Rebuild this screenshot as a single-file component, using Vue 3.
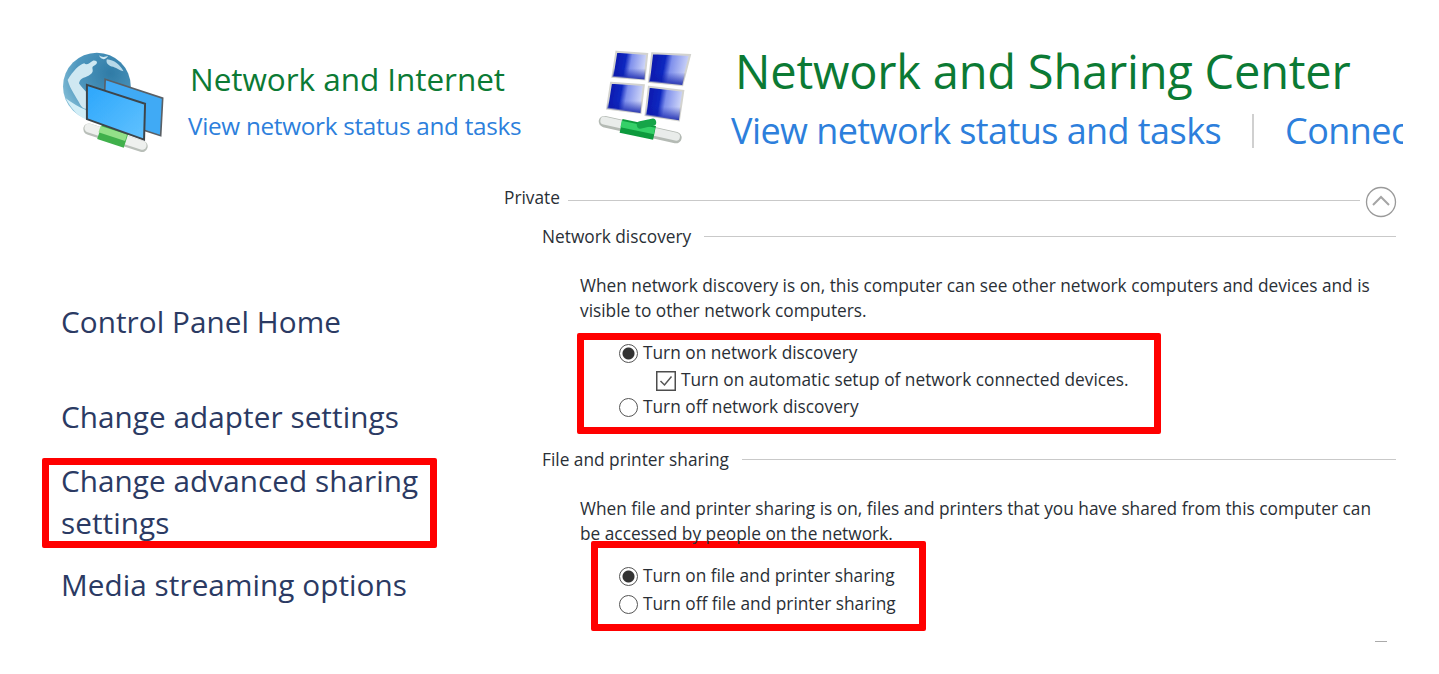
<template>
  <div class="page">
    <aside class="left">
      <header class="net-head">
        <svg class="net-icon" viewBox="60 60 320 310">
          <defs>
            <radialGradient id="globe" cx="0.7" cy="0.3" r="0.85">
              <stop offset="0" stop-color="#2f7ba6" />
              <stop offset="0.6" stop-color="#5098bf" />
              <stop offset="1" stop-color="#8fc6dc" />
            </radialGradient>
            <linearGradient id="screen" x1="0" y1="0" x2="1" y2="1">
              <stop offset="0" stop-color="#2ba6fb" />
              <stop offset="1" stop-color="#62c2ff" />
            </linearGradient>
            <filter id="soft"><feGaussianBlur stdDeviation="1.6" /></filter>
          </defs>
          <g filter="url(#soft)">
            <circle cx="170" cy="170" r="102" fill="url(#globe)" />
            <path d="M82 150 C98 124 116 104 132 100 C140 108 150 96 158 92 C176 90 172 104 160 108 C150 114 166 122 150 134 C136 146 122 140 116 160 C128 180 150 190 150 215 C150 238 132 245 120 225 C108 200 90 180 82 150Z" fill="#cfe8f2" />
            <path d="M176 76 C186 84 196 80 204 78 C196 90 184 92 176 76Z" fill="#cfe8f2" />
            <path d="M200 88 C222 90 240 104 250 124 C236 122 228 112 214 110 C204 106 196 98 200 88Z" fill="#b8d9e9" />
            <path d="M76 205 C92 235 108 255 135 268 L150 262 L136 240 C118 232 96 220 76 205Z" fill="#d2eef7" />
            <g fill="none" stroke-linecap="round">
              <path d="M146 298 L306 350" stroke="#b9bfb9" stroke-width="34" />
              <path d="M146 295 L306 347" stroke="#eef0ee" stroke-width="27" />
              <path d="M178 306 L258 332" stroke="#3fb04c" stroke-width="46" stroke-linecap="butt" />
              <path d="M178 298 L258 324" stroke="#93e088" stroke-width="20" stroke-linecap="butt" />
            </g>
            <polygon points="195,148 368,205 362,318 190,262" fill="#40aaf5" stroke="#5a6066" stroke-width="5" />
            <polygon points="140,165 315,222 312,330 140,268" fill="url(#screen)" stroke="#3e454b" stroke-width="6" />
          </g>
        </svg>
        <div class="net-text">
          <div class="net-title">Network and Internet</div>
          <a class="net-link">View network status and tasks</a>
        </div>
      </header>
      <nav class="side-nav">
        <div class="side-item home">Control Panel Home</div>
        <div class="side-item adapter">Change adapter settings</div>
        <div class="side-box">
          <div class="side-item advanced">Change advanced sharing settings</div>
        </div>
        <div class="side-item media">Media streaming options</div>
      </nav>
    </aside>

    <main class="right">
      <header class="center-head">
        <svg class="center-icon" viewBox="50 60 290 290">
          <defs>
            <linearGradient id="pane" x1="0" y1="0" x2="1" y2="0.15">
              <stop offset="0" stop-color="#0714a8" />
              <stop offset="0.42" stop-color="#0f28c0" />
              <stop offset="0.58" stop-color="#7f90ec" />
              <stop offset="1" stop-color="#cfd6f8" />
            </linearGradient>
            <linearGradient id="paneShade" x1="0" y1="0" x2="0" y2="1">
              <stop offset="0.6" stop-color="#0a1aa8" stop-opacity="0" />
              <stop offset="1" stop-color="#0a1aa8" stop-opacity="0.85" />
            </linearGradient>
            <filter id="soft2"><feGaussianBlur stdDeviation="1.6" /></filter>
          </defs>
          <g filter="url(#soft2)">
            <g fill="url(#pane)" stroke="#d3d3cf" stroke-width="6">
              <polygon points="108,65 200,72 192,148 96,140" />
              <polygon points="215,70 328,75 305,165 205,155" />
              <polygon points="92,158 190,165 180,248 80,235" />
              <polygon points="205,170 308,182 295,270 195,255" />
            </g>
            <g fill="url(#paneShade)">
              <polygon points="108,65 200,72 192,148 96,140" />
              <polygon points="215,70 328,75 305,165 205,155" />
              <polygon points="92,158 190,165 180,248 80,235" />
              <polygon points="205,170 308,182 295,270 195,255" />
            </g>
            <g fill="none" stroke-linecap="round">
              <path d="M72 274 L286 322" stroke="#b4bab4" stroke-width="34" />
              <path d="M72 271 L286 319" stroke="#e9ecea" stroke-width="24" />
              <path d="M122 287 L222 308" stroke="#0d9a3c" stroke-width="42" stroke-linecap="butt" />
              <path d="M122 281 L222 302" stroke="#34d068" stroke-width="20" stroke-linecap="butt" />
              <path d="M180 284 L216 276" stroke="#12a548" stroke-width="22" />
            </g>
          </g>
        </svg>
        <div class="center-text">
          <div class="center-title">Network and Sharing Center</div>
          <div class="center-links">
            <a>View network status and tasks</a>
            <span class="link-sep"></span>
            <a>Connec</a>
          </div>
        </div>
      </header>

      <section class="profile">
        <div class="rule-row profile-row">
          <span>Private</span>
          <span class="rule"></span>
          <svg class="collapse" width="32" height="32" viewBox="0 0 32 32">
            <circle cx="16" cy="16" r="14.5" fill="none" stroke="#9a9a9a" stroke-width="1.3" />
            <path d="M8 19 L16 11 L24 19" fill="none" stroke="#a5a5a5" stroke-width="2" />
          </svg>
        </div>

        <div class="group">
          <div class="rule-row">
            <span>Network discovery</span>
            <span class="rule"></span>
          </div>
          <p class="desc">When network discovery is on, this computer can see other network computers and devices and is visible to other network computers.</p>
          <div class="red-box box-discovery">
            <label class="option"><span class="radio on"></span>Turn on network discovery</label>
            <label class="option sub">
              <svg class="check" width="20" height="20" viewBox="0 0 20 20">
                <rect x="0.75" y="0.75" width="18.5" height="18.5" fill="#fff" stroke="#4d4d4d" stroke-width="1.5" />
                <path d="M4.5 10 L8.5 14 L15.5 5.5" fill="none" stroke="#555" stroke-width="1.5" />
              </svg>
              Turn on automatic setup of network connected devices.
            </label>
            <label class="option"><span class="radio"></span>Turn off network discovery</label>
          </div>
        </div>

        <div class="group sharing">
          <div class="rule-row">
            <span>File and printer sharing</span>
            <span class="rule"></span>
          </div>
          <p class="desc">When file and printer sharing is on, files and printers that you have shared from this computer can be accessed by people on the network.</p>
          <div class="red-box box-sharing">
            <label class="option"><span class="radio on"></span>Turn on file and printer sharing</label>
            <label class="option"><span class="radio"></span>Turn off file and printer sharing</label>
          </div>
        </div>
        <div class="stub-row"><span class="stub"></span></div>
      </section>
    </main>
  </div>
</template>

<script setup>
</script>

<style>
html,
body {
  margin: 0;
  background: #fff;
}
</style>

<style scoped>
.page {
  display: grid;
  grid-template-columns: 504px 899px;
  width: 1439px;
  height: 674px;
  overflow: hidden;
  background: #fff;
  font-family: "Open Sans", "Noto Sans", sans-serif;
  color: #1f2a38;
}

.left {
  padding: 50px 0 0 60px;
}

.net-head {
  display: flex;
  align-items: flex-start;
}

.net-icon {
  width: 107px;
  height: 103px;
  flex-shrink: 0;
}

.net-text {
  margin: 9px 0 0 21px;
  white-space: nowrap;
}

.net-title {
  margin-left: 2px;
  font-size: 31.5px;
  line-height: 40px;
  letter-spacing: -0.05px;
  color: #0b7a34;
}

.net-link {
  display: block;
  margin-top: 9px;
  font-size: 24.3px;
  line-height: 36px;
  letter-spacing: -0.3px;
  color: #2d7fdc;
}

.side-nav {
  margin-top: 148px;
  padding-left: 1px;
  font-size: 29.7px;
  letter-spacing: 0.06px;
  color: #2b3a63;
}

.side-item {
  line-height: 42px;
}

.adapter {
  margin-top: 53px;
}

.side-box {
  width: 395px;
  height: 90px;
  box-sizing: border-box;
  margin: 20px 0 16px -19px;
  padding: 0 0 0 12px;
  border: 7px solid #f00;
  border-radius: 2px;
}

.advanced {
  margin-top: -5px;
}

.right {
  overflow: hidden;
}

.center-head {
  display: flex;
  align-items: flex-start;
  padding: 50px 0 0 93px;
}

.center-icon {
  width: 97px;
  height: 97px;
  flex-shrink: 0;
}

.center-text {
  margin: -11px 0 0 41px;
  white-space: nowrap;
}

.center-title {
  font-size: 47px;
  line-height: 64px;
  letter-spacing: -0.2px;
  color: #0b7a34;
}

.center-links {
  display: flex;
  align-items: center;
  margin: 4px 0 0 -4px;
  font-size: 36px;
  line-height: 48px;
  letter-spacing: -0.57px;
  color: #2d7fdc;
}

.link-sep {
  width: 2px;
  height: 34px;
  margin: 0 31px;
  background: #d0d0d0;
  flex-shrink: 0;
}

.profile {
  padding-top: 26px;
  font-size: 17.3px;
  color: #2a2f36;
}

.rule-row {
  display: flex;
  align-items: center;
  gap: 13px;
  height: 32px;
  white-space: nowrap;
}

.profile-row {
  gap: 8px;
}

.profile-row .rule {
  margin-top: 6px;
}

.rule {
  flex: 1;
  height: 1px;
  background: #c9c9c9;
}

.collapse {
  flex-shrink: 0;
  margin: 10px 6px 0 -3px;
}

.group {
  margin: 7px 7px 0 38px;
}

.desc {
  width: 805px;
  margin: 21px 0 0 38px;
  line-height: 25px;
}

.red-box {
  box-sizing: border-box;
  margin-left: 35px;
  border: 7px solid #f00;
  border-radius: 2px;
}

.box-discovery {
  width: 584px;
  height: 101px;
  margin-top: 10px;
  padding: 0 0 0 35px;
}

.box-discovery .option:first-child {
  margin-top: -1px;
}

.box-sharing {
  width: 335px;
  height: 90px;
  margin: -5px 0 0 49px;
  padding: 13px 0 0 21px;
}

.box-sharing .option {
  height: 28px;
}

.option {
  display: flex;
  align-items: center;
  height: 27px;
  white-space: nowrap;
}

.sub {
  padding-left: 37px;
}

.radio {
  box-sizing: border-box;
  display: inline-block;
  width: 19px;
  height: 19px;
  margin: 2px 5px 0 0;
  border: 1.5px solid #555;
  border-radius: 50%;
  flex-shrink: 0;
}

.radio.on {
  background: radial-gradient(circle, #333 0 5.5px, #fff 6.5px);
}

.check {
  margin: 2px 5px 0 0;
  flex-shrink: 0;
}

.sharing {
  margin-top: 9px;
}

.stub-row {
  display: flex;
  justify-content: flex-end;
  padding: 10px 16px 0 0;
}

.stub {
  width: 12px;
  height: 1px;
  background: #aaa;
}
</style>
